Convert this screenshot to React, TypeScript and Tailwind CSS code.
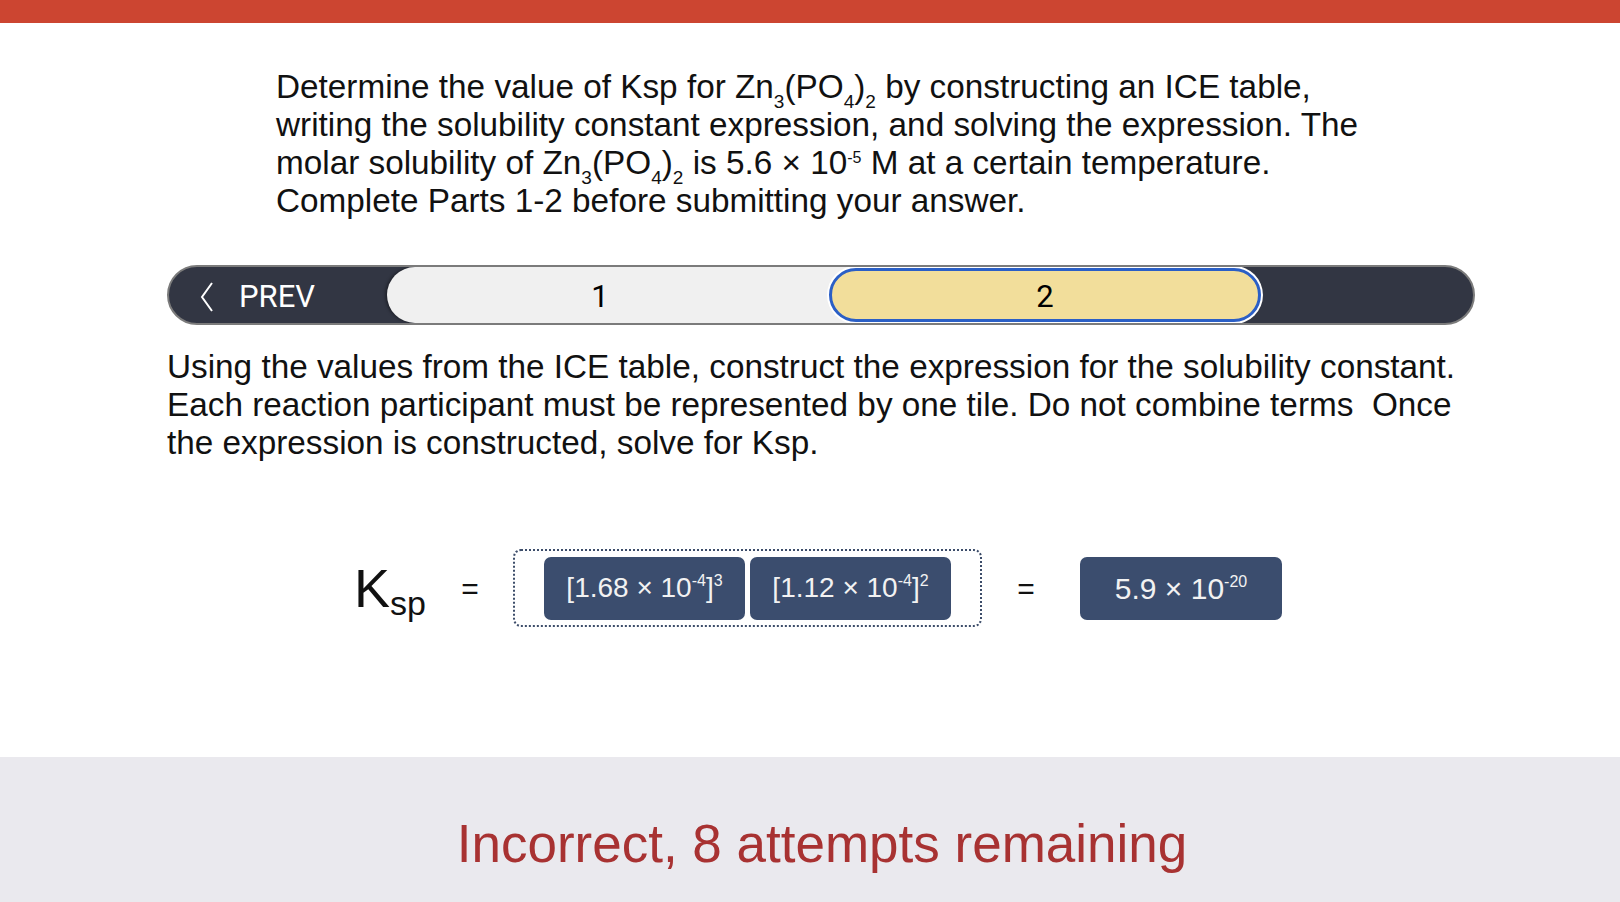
import React from 'react';

const sans = { fontFamily: '"Liberation Sans", Arial, sans-serif' };

function Tile({ children, className = '' }: { children: React.ReactNode; className?: string }) {
  return (
    <div
      className={`flex h-[63px] w-[201px] items-center justify-center rounded-[7px] bg-[#3b4d6e] text-[28px] text-[#f2f2f2] ${className}`}
    >
      <span className="whitespace-nowrap">{children}</span>
    </div>
  );
}

function Sup({ children }: { children: React.ReactNode }) {
  return <sup className="text-[16px] top-[-0.7em]">{children}</sup>;
}

function Sub({ children }: { children: React.ReactNode }) {
  return <sub className="text-[19px] bottom-[-0.5em]">{children}</sub>;
}

export default function App() {
  return (
    <div className="flex h-[902px] w-full flex-col bg-white text-[#111]" style={sans}>
      <div className="h-[23px] w-full bg-[#cc4531]" />

      {/* question */}
      <div className="pl-[276px] pt-[45px] text-[33.3px] leading-[38px]">
        Determine the value of Ksp for Zn<Sub>3</Sub>(PO<Sub>4</Sub>)<Sub>2</Sub> by constructing an ICE table,
        <br />
        writing the solubility constant expression, and solving the expression. The
        <br />
        molar solubility of Zn<Sub>3</Sub>(PO<Sub>4</Sub>)<Sub>2</Sub> is 5.6 × 10<Sup>-5</Sup> M at a certain temperature.
        <br />
        Complete Parts 1-2 before submitting your answer.
      </div>

      {/* part navigation */}
      <div className="mt-[45px] pl-[167px]">
        <div
          className="flex h-[60px] w-[1308px] items-center overflow-hidden rounded-full border-2 border-[#7b7b7b] bg-[#323643]"
          style={{ fontFamily: 'Roboto, "Liberation Sans", sans-serif' }}
        >
          <div className="flex h-full w-[218px] items-center pl-[30px] pt-[4px] text-white">
            <svg width="16" height="30" viewBox="0 0 16 30" className="mr-[24px]">
              <polyline points="13,1 3,15 13,29" fill="none" stroke="white" strokeWidth="2" />
            </svg>
            <span className="text-[31px]">PREV</span>
          </div>
          <div className="flex h-full w-[472px] items-center justify-center rounded-l-full bg-[#f0f0f0] pr-[46px] pt-[4px] text-[31px] text-black shadow-[-2px_0_3px_rgba(0,0,0,0.35)]">
            1
          </div>
          <div className="relative -ml-[30px] flex h-[54px] w-[432px] items-center justify-center rounded-full border-[3px] border-[#2b5fc6] bg-[#f2de9b] pt-[4px] text-[31px] text-black ring-2 ring-white">
            2
          </div>
        </div>
      </div>

      {/* instructions */}
      <div className="pl-[167px] pt-[23px] text-[33.3px] leading-[38px]">
        Using the values from the ICE table, construct the expression for the solubility constant.
        <br />
        Each reaction participant must be represented by one tile. Do not combine terms{'\u00a0'} Once
        <br />
        the expression is constructed, solve for Ksp.
      </div>

      {/* expression */}
      <div className="mt-[87px] flex h-[78px] items-center pl-[354px]">
        <div className="w-[100px] whitespace-nowrap text-[54px] leading-none">
          K<span className="relative top-[8px] text-[34px]">sp</span>
        </div>
        <div className="w-[32px] text-center text-[30px]">=</div>
        <div className="ml-[27px] flex h-[78px] w-[469px] items-center gap-[5px] rounded-[8px] border-2 border-dotted border-[#3d4d6a] pl-[29px]">
          <Tile>
            [1.68 × 10<Sup>-4</Sup>]<Sup>3</Sup>
          </Tile>
          <Tile>
            [1.12 × 10<Sup>-4</Sup>]<Sup>2</Sup>
          </Tile>
        </div>
        <div className="ml-[28px] w-[32px] text-center text-[30px]">=</div>
        <Tile className="ml-[38px] w-[202px] text-[30px]">
          5.9 × 10<Sup>-20</Sup>
        </Tile>
      </div>

      {/* feedback */}
      <div className="mt-auto flex h-[145px] w-full justify-center bg-[#eae9ee] pl-[24px] pt-[60px]">
        <div className="text-[53px] leading-none text-[#a83232]">Incorrect, 8 attempts remaining</div>
      </div>
    </div>
  );
}
